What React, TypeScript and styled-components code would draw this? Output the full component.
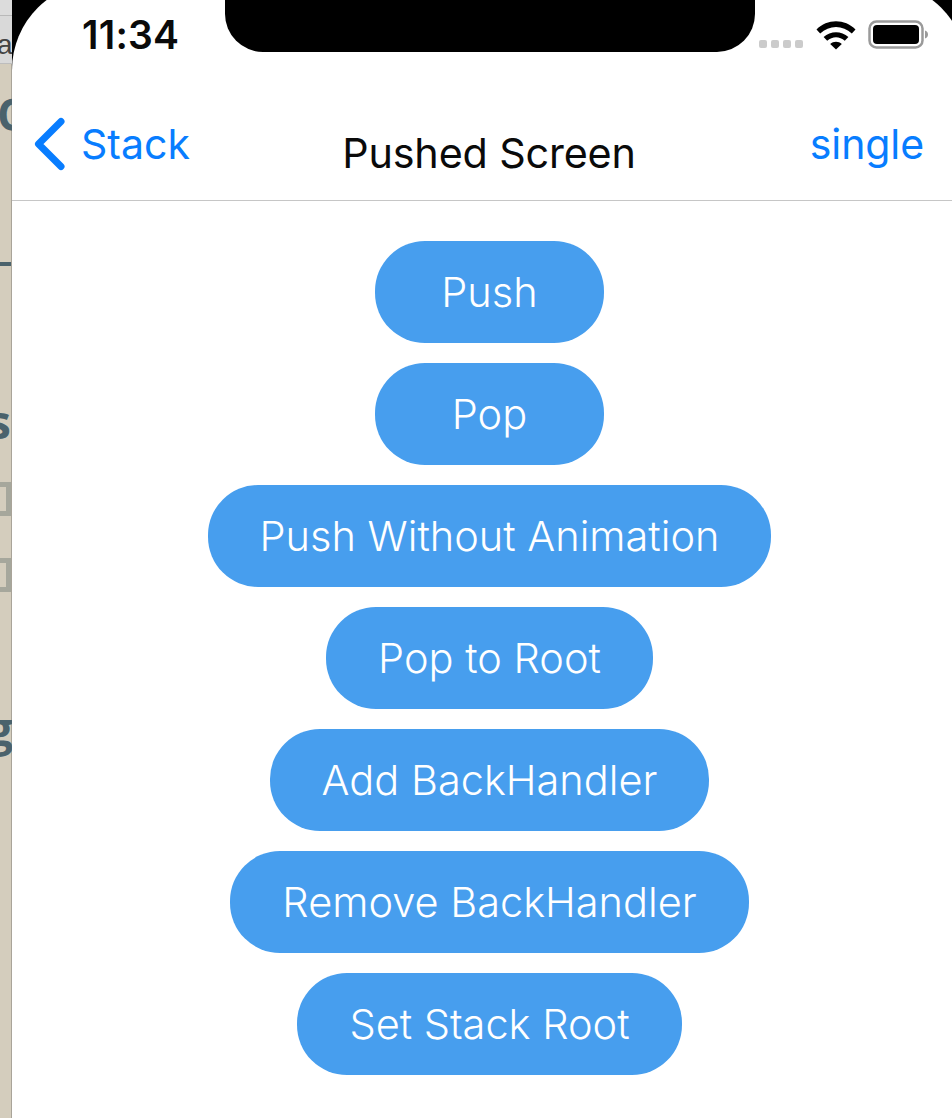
import React from "react";
import styled, { createGlobalStyle } from "styled-components";

const Global = createGlobalStyle`
  html, body { margin: 0; padding: 0; background: #d4cdbd; overflow: hidden; }
  #root { width: 952px; height: 1118px; }
`;

const Page = styled.div`
  display: flex;
  width: 952px;
  height: 1118px;
  overflow: hidden;
  font-family: Inter, "Liberation Sans", sans-serif;
`;

const Backdrop = styled.aside`
  flex: 0 0 12px;
  display: flex;
  flex-direction: column;
  overflow: hidden;
  background: #d4cdbd;
  box-shadow: inset -1px 0 0 #a9a499;
`;

const ChromeTab = styled.div`
  flex: 0 0 16px;
  background: #dcdcdc;
  border-bottom: 1px solid #b9b9b9;
  box-sizing: border-box;
`;

const ChromeBar = styled.div`
  flex: 0 0 48px;
  background: #d9d9d9;
  border-bottom: 1px solid #bdbdbd;
  box-sizing: border-box;
  color: #444;
  font: 28px/58px "Liberation Sans", sans-serif;
  text-indent: -3px;
  overflow: hidden;
`;

const Glyph = styled.div<{ $top: number; $size: number; $shift: number }>`
  flex: none;
  height: ${(p) => p.$size}px;
  margin-top: ${(p) => p.$top}px;
  margin-left: ${(p) => p.$shift}px;
  color: #4a626c;
  font: 700 ${(p) => p.$size}px/1 "Open Sans", sans-serif;
  white-space: nowrap;
`;

const Rule = styled.div<{ $top: number }>`
  flex: 0 0 4px;
  margin-top: ${(p) => p.$top}px;
  margin-right: 1px;
  background: #4a626c;
`;

const Box = styled.div<{ $top: number }>`
  flex: 0 0 34px;
  width: 30px;
  margin-top: ${(p) => p.$top}px;
  margin-left: -19px;
  box-sizing: border-box;
  border: 5px solid #a6a79c;
`;

const Phone = styled.main`
  flex: 1;
  min-width: 0;
  background: #000;
  overflow: hidden;
`;

const Screen = styled.div`
  position: relative;
  width: 955px;
  height: 1136px;
  margin-top: -18px;
  background: #fff;
  border-radius: 88px 88px 0 0;
  display: flex;
  flex-direction: column;
`;

const Notch = styled.div`
  position: absolute;
  top: 0;
  left: 213px;
  width: 530px;
  height: 70px;
  background: #000;
  border-radius: 0 0 38px 38px;
`;

const StatusBar = styled.div`
  flex: 0 0 119px;
  box-sizing: border-box;
  padding: 30px 39px 0 70px;
  display: flex;
  justify-content: space-between;
  align-items: flex-start;
`;

const Clock = styled.span`
  font-size: 39px;
  font-weight: 600;
  line-height: 46px;
  letter-spacing: 0.2px;
  color: #0a0a0a;
`;

const Indicators = styled.div`
  display: flex;
  align-items: flex-start;
  padding-top: 8px;
`;

const SignalDots = styled.div`
  display: flex;
  gap: 4px;
  margin-top: 20px;
  margin-right: 13px;
`;

const Dot = styled.i`
  width: 8px;
  height: 8px;
  border-radius: 2px;
  background: #cbcbcb;
`;

const NavBar = styled.header`
  flex: 0 0 100px;
  box-sizing: border-box;
  border-bottom: 1px solid #c6c6c6;
  display: grid;
  grid-template-columns: 1fr auto 1fr;
  align-items: start;
  padding: 0 23px 0 22px;
`;

const BackLink = styled.a`
  display: flex;
  align-items: center;
  gap: 15px;
  height: 68px;
  margin-top: 9px;
  margin-left: -1px;
  color: #087dff;
  font-size: 41px;
  font-weight: 400;
  letter-spacing: 0.05px;
`;

const ActionLink = styled.a`
  justify-self: end;
  height: 68px;
  margin-top: 9px;
  margin-right: 20px;
  color: #087dff;
  font-size: 41px;
  line-height: 68px;
  letter-spacing: -0.1px;
`;

const Title = styled.h1`
  margin: 27px 0 0;
  color: #0a0a0a;
  font-size: 41.3px;
  font-weight: 400;
  line-height: 50px;
  letter-spacing: -0.15px;
`;

const Actions = styled.section`
  display: flex;
  flex-direction: column;
  align-items: center;
  gap: 20.5px;
  padding-top: 40px;
`;

const PillButton = styled.button`
  min-width: 229px;
  height: 101.5px;
  padding: 0 52px 0;
  border: 0;
  border-radius: 50px;
  background: #479eee;
  color: #fff;
  font-family: Inter, "Liberation Sans", sans-serif;
  font-size: 41.5px;
  font-weight: 300;
  white-space: nowrap;
`;

const labels = [
  "Push",
  "Pop",
  "Push Without Animation",
  "Pop to Root",
  "Add BackHandler",
  "Remove BackHandler",
  "Set Stack Root",
];

const Wifi = () => (
  <svg width="40" height="30" viewBox="0 0 40 30" fill="none" style={{ marginRight: 12 }}>
    <path d="M0.5 9.5C11 -1.5 29 -1.5 39.5 9.5L35.8 13.5C27 4.8 13 4.8 4.2 13.5Z" fill="#000" />
    <path d="M7.6 17C14.5 10.5 25.5 10.5 32.4 17L28.8 20.8C23.6 16 16.4 16 11.2 20.8Z" fill="#000" />
    <path d="M14.2 24C17.5 21 22.5 21 25.8 24L20 29.5Z" fill="#000" />
  </svg>
);

const Battery = () => (
  <svg width="60" height="30" viewBox="0 0 60 30" fill="none">
    <rect x="1.5" y="1.5" width="53" height="26" rx="7" stroke="#9a9a9a" strokeWidth="2.5" />
    <rect x="5" y="5" width="46" height="19" rx="4" fill="#000" />
    <path d="M57 10.5C59.5 11.5 60 13 60 14.5C60 16 59.5 17.5 57 18.5Z" fill="#9a9a9a" />
  </svg>
);

const Chevron = () => (
  <svg width="33" height="54" viewBox="0 0 33 54" fill="none">
    <path d="M28 4.5L5.5 27L28 49.5" stroke="#087dff" strokeWidth="7" strokeLinecap="round" strokeLinejoin="round" />
  </svg>
);

export default function App() {
  return (
    <Page>
      <Global />
      <Backdrop>
        <ChromeTab />
        <ChromeBar>a</ChromeBar>
        <Glyph $top={28} $size={44} $shift={-3}>O</Glyph>
        <Rule $top={126} />
        <Glyph $top={132} $size={46} $shift={-12}>s</Glyph>
        <Box $top={38} />
        <Box $top={42} />
        <Glyph $top={113} $size={46} $shift={-13}>g</Glyph>
      </Backdrop>
      <Phone>
        <Screen>
          <StatusBar>
            <Clock>11:34</Clock>
            <Indicators>
              <SignalDots>
                <Dot />
                <Dot />
                <Dot />
                <Dot />
              </SignalDots>
              <Wifi />
              <Battery />
            </Indicators>
          </StatusBar>
          <Notch />
          <NavBar>
            <BackLink>
              <Chevron />
              Stack
            </BackLink>
            <Title>Pushed Screen</Title>
            <ActionLink>single</ActionLink>
          </NavBar>
          <Actions>
            {labels.map((label) => (
              <PillButton key={label}>{label}</PillButton>
            ))}
          </Actions>
        </Screen>
      </Phone>
    </Page>
  );
}
